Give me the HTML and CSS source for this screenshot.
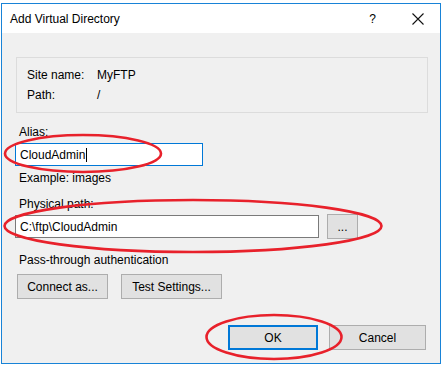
FILE: index.html
```html
<!DOCTYPE html>
<html>
<head>
<meta charset="utf-8">
<link rel="stylesheet" href="styles.css">
</head>
<body>
<div class="window">
  <div class="titlebar">
    <span class="title">Add Virtual Directory</span>
    <span class="help">?</span>
    <svg class="close" width="12" height="12" viewBox="0 0 12 12"><path d="M0.5 0.5 L11.5 11.5 M11.5 0.5 L0.5 11.5" stroke="#111" stroke-width="1.1" fill="none"/></svg>
  </div>
  <div class="body">
    <div class="group">
      <div class="row"><span class="lbl">Site name:</span><span>MyFTP</span></div>
      <div class="row"><span class="lbl">Path:</span><span>/</span></div>
    </div>
    <div class="label alias-label">Alias:</div>
    <div class="textbox focused">CloudAdmin<span class="caret"></span></div>
    <div class="hint">Example: images</div>
    <div class="label phys-label">Physical path:</div>
    <div class="pathrow">
      <div class="textbox path">C:\ftp\CloudAdmin</div>
      <div class="btn browse">...</div>
    </div>
    <div class="label pass-label">Pass-through authentication</div>
    <div class="btnrow">
      <div class="btn connect">Connect as...</div>
      <div class="btn test">Test Settings...</div>
    </div>
    <div class="footer">
      <div class="btn ok">OK</div>
      <div class="btn cancel">Cancel</div>
    </div>
  </div>
  <svg class="marks" width="443" height="366" viewBox="0 0 443 366">
    <ellipse cx="83" cy="153.5" rx="78" ry="18.5" fill="none" stroke="#e8212b" stroke-width="2.6"/>
    <ellipse cx="193" cy="226" rx="188.5" ry="26" fill="none" stroke="#e8212b" stroke-width="2.6"/>
    <ellipse cx="274" cy="337" rx="67.5" ry="22" fill="none" stroke="#e8212b" stroke-width="2.6"/>
  </svg>
</div>
</body>
</html>
```
FILE: styles.css
```css
html, body {
  margin: 0;
  padding: 0;
  background: #ffffff;
}
body {
  width: 443px;
  height: 366px;
  overflow: hidden;
  font-family: "Segoe UI", "Liberation Sans", Arial, sans-serif;
  font-size: 12px;
  color: #000;
}
.window {
  position: relative;
  box-sizing: border-box;
  margin: 3px 0 0 1px;
  width: 440px;
  height: 361px;
  border: 1px solid #1883d7;
  background: #f0f0f0;
  display: flex;
  flex-direction: column;
}
.titlebar {
  height: 29px;
  background: #fff;
  display: flex;
  align-items: center;
  padding-left: 8px;
  font-size: 12px;
}
.title {
  flex: 1;
  padding-top: 1px;
}
.help {
  margin-right: 36px;
  font-size: 12px;
  padding-top: 1px;
}
.close {
  margin-right: 16px;
}
.body {
  flex: 1;
  display: flex;
  flex-direction: column;
  padding: 0 12px 0 13px;
}
.group {
  margin: 24px 0 0 1px;
  border: 1px solid #dcdcdc;
  padding: 8px 10px 0;
  box-sizing: border-box;
  height: 56px;
}
.row {
  display: flex;
  height: 20px;
  line-height: 18px;
}
.lbl {
  width: 70px;
}
.label, .hint {
  line-height: 16px;
  padding-left: 4px;
}
.alias-label {
  margin-top: 11px;
}
.textbox {
  box-sizing: border-box;
  height: 23px;
  background: #fff;
  border: 1px solid #7a7a7a;
  line-height: 20px;
  padding-left: 4px;
  display: flex;
  align-items: center;
}
.textbox.focused {
  margin-top: 3px;
  width: 188px;
  border-color: #0078d7;
}
.caret {
  display: inline-block;
  width: 1px;
  height: 14px;
  background: #000;
  margin-left: 1px;
}
.hint {
  margin-top: 4px;
}
.phys-label {
  margin-top: 10px;
}
.pathrow {
  margin-top: 2px;
  display: flex;
  align-items: center;
  height: 25px;
}
.textbox.path {
  width: 304px;
}
.btn {
  box-sizing: border-box;
  background: #e1e1e1;
  border: 1px solid #adadad;
  display: flex;
  align-items: center;
  justify-content: center;
}
.browse {
  margin-left: 8px;
  width: 31px;
  height: 25px;
}
.pass-label {
  margin-top: 13px;
}
.btnrow {
  margin-top: 6px;
  display: flex;
  gap: 13px;
  padding-left: 2px;
}
.connect {
  width: 91px;
  height: 25px;
}
.test {
  width: 101px;
  height: 25px;
}
.footer {
  margin-top: 26px;
  display: flex;
  justify-content: flex-end;
  gap: 11px;
  padding-right: 2px;
}
.ok {
  width: 90px;
  height: 25px;
  border: 2px solid #0078d7;
}
.cancel {
  width: 97px;
  height: 25px;
}
.marks {
  position: absolute;
  left: -2px;
  top: -4px;
  pointer-events: none;
}
```
